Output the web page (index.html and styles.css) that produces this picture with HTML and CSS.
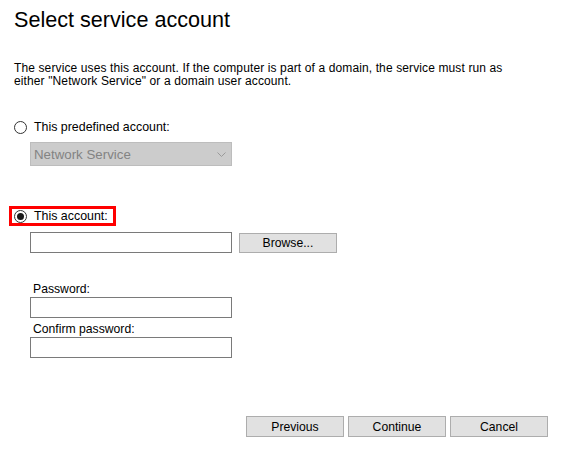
FILE: index.html
```html
<!DOCTYPE html>
<html lang="en">
<head>
<meta charset="utf-8">
<title>Select service account</title>
<link rel="stylesheet" href="styles.css">
</head>
<body>
<div class="page">
  <h1 class="title">Select service account</h1>
  <p class="intro">The service uses this account. If the computer is part of a domain, the service must run as<br>either "Network Service" or a domain user account.</p>

  <div class="option">
    <span class="radio"></span>
    <span class="option-label">This predefined account:</span>
  </div>
  <div class="select">
    <span class="select-text">Network Service</span>
    <svg class="chev" width="9" height="5" viewBox="0 0 9 5"><path d="M0.5 0.5 L4.5 4.5 L8.5 0.5" fill="none" stroke="#9a9a9a" stroke-width="1"/></svg>
  </div>

  <div class="option option-selected">
    <span class="radio radio-on"><span class="dot"></span></span>
    <span class="option-label">This account:</span>
  </div>
  <div class="account-row">
    <div class="field"></div>
    <div class="btn btn-browse">Browse...</div>
  </div>

  <div class="field-label label-first">Password:</div>
  <div class="field"></div>
  <div class="field-label">Confirm password:</div>
  <div class="field"></div>

  <div class="buttons">
    <div class="btn">Previous</div>
    <div class="btn">Continue</div>
    <div class="btn">Cancel</div>
  </div>
</div>
</body>
</html>
```

FILE: styles.css
```css
html, body {
  margin: 0;
  padding: 0;
  background: #ffffff;
}
body {
  width: 564px;
  height: 451px;
  overflow: hidden;
  font-family: "Liberation Sans", Arial, sans-serif;
  font-size: 12px;
  color: #000000;
}
.page {
  padding: 8px 16px 0 14px;
}
.title {
  margin: 0;
  font-size: 21.6px;
  font-weight: normal;
  line-height: 24px;
  color: #000000;
}
.intro {
  margin: 30px 0 0 0;
  line-height: 13px;
  font-size: 12px;
  letter-spacing: 0.12px;
  color: #000000;
}
.option {
  display: inline-flex;
  align-items: center;
  height: 14px;
  margin: 29px 0 0 -5px;
  padding: 0 5px 0 2px;
  border: 3px solid transparent;
  line-height: 14px;
}
.option-selected {
  border-color: #ff0000;
  margin-top: 40px;
}
.radio {
  box-sizing: border-box;
  width: 13px;
  height: 13px;
  border: 1px solid #333333;
  border-radius: 50%;
  margin-right: 7px;
  display: flex;
  align-items: center;
  justify-content: center;
  background: #ffffff;
}
.dot {
  width: 7px;
  height: 7px;
  border-radius: 50%;
  background: #1a1a1a;
}
.option-label {
  font-size: 12.4px;
  color: #000000;
}
.select {
  box-sizing: border-box;
  width: 202px;
  height: 24px;
  margin: 5px 0 0 16px;
  background: #cccccc;
  border: 1px solid #bdbdbd;
  display: flex;
  align-items: center;
  justify-content: space-between;
  padding: 0 5px 0 3px;
  font-size: 13.3px;
  color: #838383;
}
.chev {
  display: block;
  margin-top: 1px;
}
.account-row {
  display: flex;
  align-items: flex-start;
  gap: 7px;
  margin: 6px 0 0 16px;
}
.field {
  box-sizing: border-box;
  width: 202px;
  height: 21px;
  border: 1px solid #7a7a7a;
  background: #ffffff;
  margin-left: 16px;
}
.account-row .field {
  margin-left: 0;
}
.btn {
  box-sizing: border-box;
  width: 98px;
  height: 21px;
  background: #e1e1e1;
  border: 1px solid #adadad;
  display: flex;
  align-items: center;
  justify-content: center;
  font-size: 12.2px;
  color: #000000;
}
.btn-browse {
  height: 20px;
  margin-top: 1px;
}
.field-label {
  margin: 3px 0 0 19px;
  line-height: 16px;
  font-size: 12.2px;
}
.label-first {
  margin-top: 28px;
}
.buttons {
  display: flex;
  justify-content: flex-end;
  gap: 4px;
  margin-top: 58px;
}
```
